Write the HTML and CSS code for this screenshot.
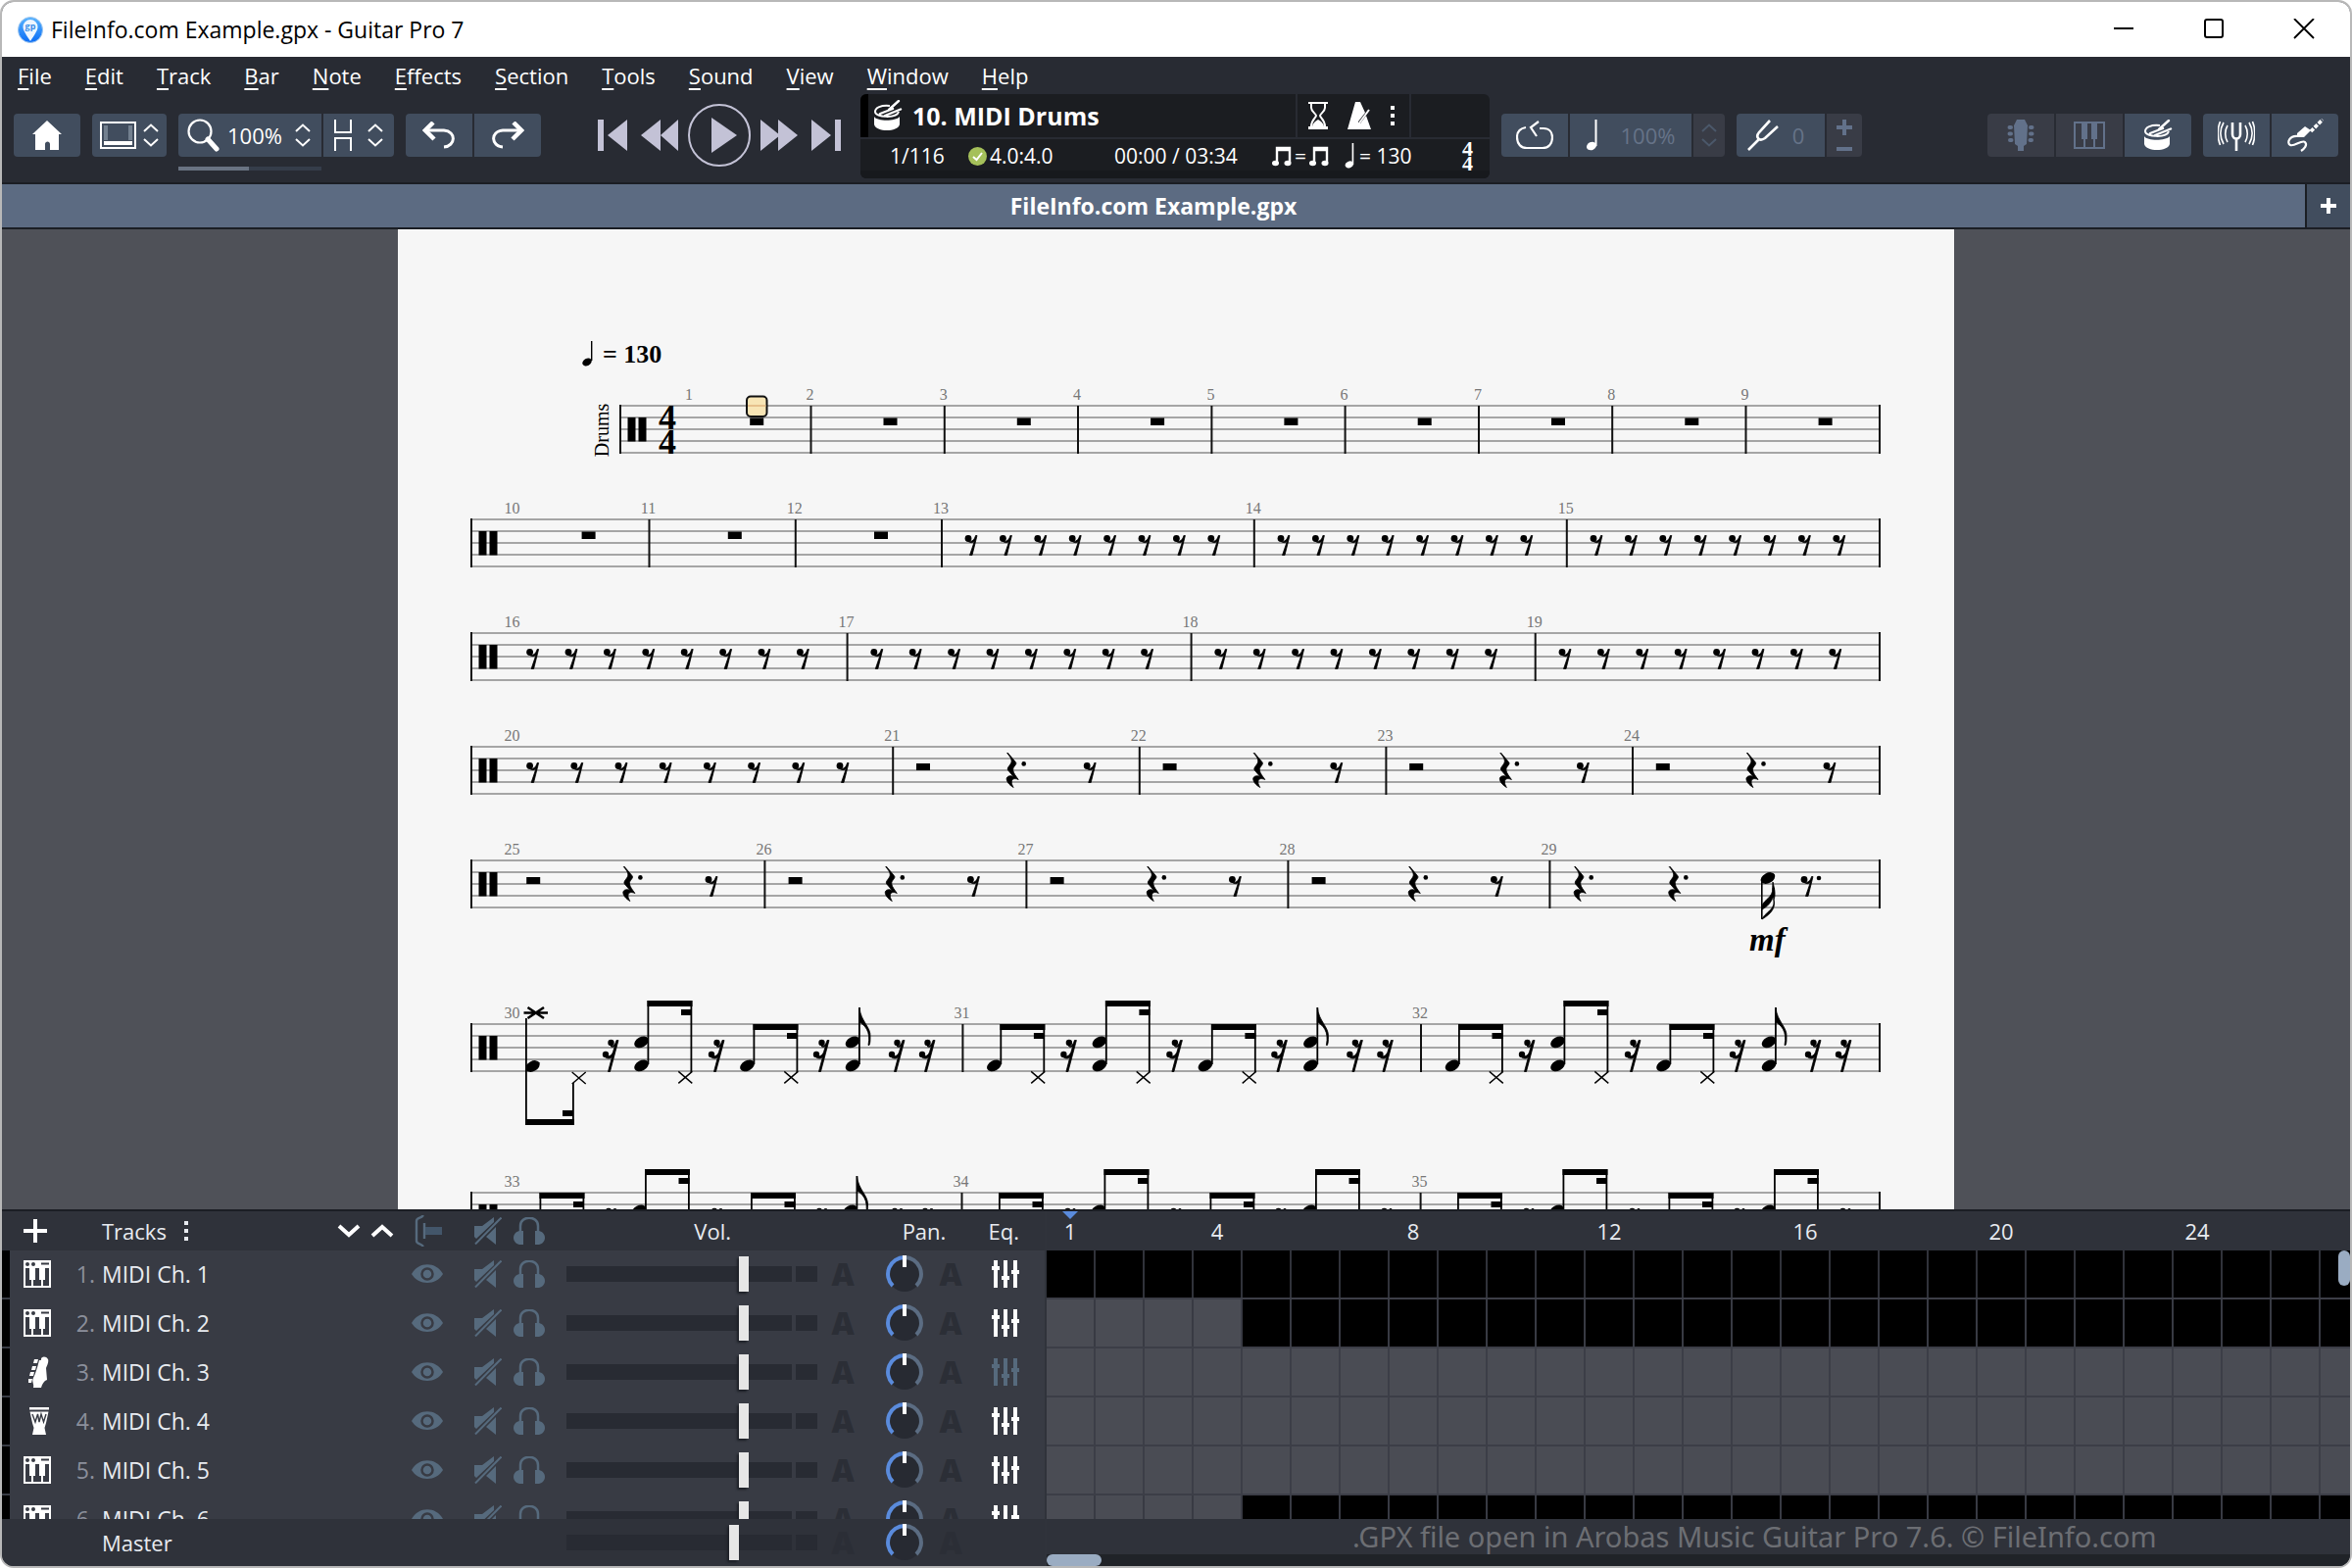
FILE: index.html
```html
<!DOCTYPE html>
<html lang="en">
<head>
<meta charset="utf-8">
<title>FileInfo.com Example.gpx - Guitar Pro 7</title>
<link rel="stylesheet" href="styles.css">
</head>
<body>
<svg class="defs" aria-hidden="true">
  <linearGradient id="logo-blue" x1="0" y1="0" x2="0" y2="1"><stop offset="0" stop-color="#58b4ff"/><stop offset="1" stop-color="#0a6cf5"/></linearGradient>
  <symbol id="updown" viewBox="0 0 16 24"><path d="M1 8 8 1.500 15 8M1 16 8 22.500 15 16" fill="none" stroke="currentColor" stroke-width="2"/></symbol>
  <symbol id="drum" viewBox="0 0 30 32"><path d="M1 17C4 22 23 22 27 17V25C25 33 3 33 1 25Z" fill="currentColor"/><path d="M17 6C8 5 2 8 2 12C2 18 24 19 26 12" fill="none" stroke="currentColor" stroke-width="2"/><path d="M7 14 20 9M12 16 28 9.500M16 10 26 1" fill="none" stroke="currentColor" stroke-width="2.400" stroke-linecap="round"/></symbol>
  <symbol id="keys" viewBox="0 0 28 28"><path d="M0 0H28V28H0Z" fill="currentColor"/><path d="M2 8H26V26H2ZM18 2.500H26V4.500H18Z" fill="#383b44"/><path d="M6 7H12V20H10V27H8V20H6ZM16 7H22V20H20V27H18V20H16Z" fill="currentColor"/><circle cx="4" cy="4" r="2" fill="#383b44"/><circle cx="10" cy="4" r="2" fill="#383b44"/></symbol>
  <symbol id="headstock" viewBox="0 0 22 32"><path d="M13 4C12 0 18-1 20 3C21 6 19 9 18 12L19 24C16 25 14 28 13 32H5C6 28 3 26 5 22C7 18 9 12 11 4Z" fill="currentColor"/><path d="M6 3H10L9 7H5ZM4 10H8L7 14H3ZM2 16H6L5 20H1ZM0 23H4L3 27H0Z" fill="currentColor"/></symbol>
  <symbol id="djembe" viewBox="0 0 22 28"><path d="M1 0H21V2.500H1ZM1.500 4.500H20.500L18 16L16.500 21L18 28H4L5.500 21L4 16Z" fill="currentColor"/><path d="M4 7 7 15 9.500 7 11 15 13 7 15.500 15 18 7" fill="none" stroke="#383b44" stroke-width="1.400"/></symbol>
  <symbol id="eye" viewBox="0 0 32 20"><path d="M0 10C7-3 25-3 32 10C25 22 7 22 0 10Z" fill="currentColor"/><circle cx="16" cy="10" r="5.500" fill="none" stroke="#383b44" stroke-width="2.500"/></symbol>
  <symbol id="mute" viewBox="0 0 28 28"><path d="M0 9H8L20 0V5L2 22L0 20ZM22 10V28L12 20Z" fill="currentColor"/><path d="M1 27.500 27.500 .500" stroke="currentColor" stroke-width="2"/></symbol>
  <symbol id="phones" viewBox="0 0 32 28"><path d="M7 16V9C7-2 25-2 25 9V16" fill="none" stroke="currentColor" stroke-width="2.500"/><path d="M10 14V28H6C-2 26-2 16 6 14ZM22 14V28H26C34 26 34 16 26 14Z" fill="currentColor"/></symbol>
  <symbol id="eq" viewBox="0 0 28 28"><path d="M2 0H6V28H2ZM12 0H16V28H12ZM22 0H26V28H22ZM0 6H8V10H0ZM10 16H18V20H10ZM20 10H28V14H20Z" fill="currentColor"/></symbol>
  <symbol id="knob" viewBox="0 0 38 38"><circle cx="19" cy="20" r="17" fill="#272a32"/><path d="M7 31A17 17 0 0 1 19 2" fill="none" stroke="#5a8bdc" stroke-width="4"/><path d="M19 2A17 17 0 0 1 31 31" fill="none" stroke="#5b6c82" stroke-width="4"/><path d="M17 0H21V12H17Z" fill="#fff"/></symbol>
  <symbol id="quarter" viewBox="0 0 13 32"><ellipse cx="5" cy="27" rx="5.200" ry="4" transform="rotate(-25 5 27)" fill="currentColor"/><path d="M8.500 0H10.500V27H8.500Z" fill="currentColor"/></symbol>
  <symbol id="pair" viewBox="0 0 20 21"><path d="M5 17V2H18V17M5 4H18" fill="none" stroke="currentColor" stroke-width="2.400"/><ellipse cx="3.500" cy="17.500" rx="3.500" ry="2.800" fill="currentColor"/><ellipse cx="16" cy="17.500" rx="3.500" ry="2.800" fill="currentColor"/></symbol>
  <symbol id="dots" viewBox="0 0 5 20"><path d="M0 0H4V4H0ZM0 8H4V12H0ZM0 16H4V20H0Z" fill="currentColor"/></symbol>
</svg>

<div class="window">
  <header class="titlebar">
    <svg class="logo" width="26" height="27" viewBox="0 0 26 27"><ellipse cx="13" cy="13.500" rx="12.500" ry="13" fill="url(#logo-blue)" stroke="#9fc6ee"/><path d="M13 25C9 19 5.500 14 5.500 10.500A7.500 7.500 0 0 1 20.500 10.500C20.500 14 17 19 13 25Z" fill="#eef6ff"/><text class="logo-text" x="13" y="13" text-anchor="middle">gp</text></svg>
    <h1 class="title">FileInfo.com Example.gpx - Guitar Pro 7</h1>
    <div class="window-controls">
      <button aria-label="Minimize"><svg width="22" height="22" viewBox="0 0 22 22"><path d="M1 10H21" stroke="#000" stroke-width="2"/></svg></button>
      <button aria-label="Maximize"><svg width="22" height="22" viewBox="0 0 22 22"><rect x="2" y="1" width="18" height="18" rx="2" fill="none" stroke="#000" stroke-width="2"/></svg></button>
      <button aria-label="Close"><svg width="22" height="22" viewBox="0 0 22 22"><path d="M1 0 21 20M21 0 1 20" stroke="#000" stroke-width="1.800"/></svg></button>
    </div>
  </header>

  <nav class="menubar">
    <a href="#"><u>F</u>ile</a><a href="#"><u>E</u>dit</a><a href="#"><u>T</u>rack</a><a href="#"><u>B</u>ar</a><a href="#"><u>N</u>ote</a><a href="#"><u>E</u>ffects</a><a href="#"><u>S</u>ection</a><a href="#"><u>T</u>ools</a><a href="#"><u>S</u>ound</a><a href="#"><u>V</u>iew</a><a href="#"><u>W</u>indow</a><a href="#"><u>H</u>elp</a>
  </nav>

  <div class="toolbar">
    <div class="group"><button class="tool w68" aria-label="Home"><svg width="32" height="30" viewBox="0 0 32 30"><path d="M16 0 31 14H28V30H19V24C19 20.500 14 20.500 14 24V30H4V14H1Z" fill="currentColor"/></svg></button></div>
    <div class="group"><button class="tool w76" aria-label="Layout"><svg width="37" height="28" viewBox="0 0 37 28"><rect x="1" y="1" width="35" height="26" fill="none" stroke="currentColor" stroke-width="2"/><path d="M4 4H8V19H4ZM29 4H33V19H29Z" fill="#73808f"/><path d="M4 20H33V24H4Z" fill="currentColor"/></svg><svg width="16" height="24"><use href="#updown"/></svg></button></div>
    <div class="group zoom-group">
      <button class="tool zoom" aria-label="Zoom"><svg width="34" height="34" viewBox="0 0 34 34"><circle cx="13" cy="13" r="11.500" fill="none" stroke="currentColor" stroke-width="2.200"/><path d="M21 21 30 31" stroke="currentColor" stroke-width="5" stroke-linecap="round"/></svg><span>100%</span><svg width="16" height="24"><use href="#updown"/></svg></button>
      <button class="tool w72" aria-label="Spacing"><svg width="18" height="32" viewBox="0 0 18 32"><path d="M1 0V13H17V0M1 32V19H17V32" fill="none" stroke="currentColor" stroke-width="2"/></svg><svg width="16" height="24"><use href="#updown"/></svg></button>
      <div class="zoom-bar"></div>
    </div>
    <div class="group">
      <button class="tool w68" aria-label="Undo"><svg width="34" height="28" viewBox="0 0 34 28"><path d="M2 9H22C35 10 34 25 22 26" fill="none" stroke="currentColor" stroke-width="3"/><path d="M11 1 3 9 12 18" fill="none" stroke="currentColor" stroke-width="4.500"/></svg></button>
      <button class="tool w68" aria-label="Redo"><svg width="34" height="28" viewBox="0 0 34 28"><path d="M32 9H12C-1 10 0 25 12 26" fill="none" stroke="currentColor" stroke-width="3"/><path d="M23 1 31 9 22 18" fill="none" stroke="currentColor" stroke-width="4.500"/></svg></button>
    </div>

    <div class="transport">
      <button aria-label="First bar"><svg width="30" height="32" viewBox="0 0 30 32"><path d="M0 0H6V32H0ZM30 0V32L10 16Z" fill="currentColor"/></svg></button>
      <button aria-label="Rewind"><svg width="38" height="32" viewBox="0 0 38 32"><path d="M20 0V32L0 16ZM38 0V32L20 16Z" fill="currentColor"/></svg></button>
      <button aria-label="Play"><svg width="64" height="64" viewBox="0 0 64 64"><circle cx="32" cy="32" r="31" fill="none" stroke="currentColor" stroke-width="2"/><path d="M24 14V50L50 32Z" fill="currentColor"/></svg></button>
      <button aria-label="Forward"><svg width="38" height="32" viewBox="0 0 38 32"><path d="M0 0V32L20 16ZM18 0V32L38 16Z" fill="currentColor"/></svg></button>
      <button aria-label="Last bar"><svg width="30" height="32" viewBox="0 0 30 32"><path d="M0 0V32L20 16ZM24 0H30V32H24Z" fill="currentColor"/></svg></button>
    </div>

    <section class="display">
      <div class="display-top">
        <span class="track-color"></span>
        <div class="current"><svg width="30" height="32"><use href="#drum"/></svg><strong>10. MIDI Drums</strong></div>
        <div class="display-tools">
          <button aria-label="Countdown"><svg width="20" height="28" viewBox="0 0 20 28"><path d="M0 0H20V2H0ZM0 25H20V28H0Z" fill="currentColor"/><path d="M3 2V6C3 10 8 12 8 14C8 16 3 18 3 25M17 2V6C17 10 12 12 12 14C12 16 17 18 17 25" fill="none" stroke="currentColor" stroke-width="2"/><path d="M10 18C13 20 16 22 16 26H4C4 22 7 20 10 18Z" fill="currentColor"/></svg></button>
          <button aria-label="Metronome"><svg width="24" height="28" viewBox="0 0 24 28"><path d="M8 0H13L18 11L11 20V22H13L19 14L24 28H0Z" fill="currentColor"/><path d="M11 23 22 8" stroke="currentColor" stroke-width="2"/></svg></button>
          <button aria-label="More"><svg width="5" height="20"><use href="#dots"/></svg></button>
        </div>
        <span class="display-end"></span>
      </div>
      <div class="display-bottom">
        <span>1/116</span>
        <span><svg width="19" height="19" viewBox="0 0 19 19"><circle cx="9.500" cy="9.500" r="9.500" fill="#a5c05a"/><path d="M5 10 8.500 13 14 6" fill="none" stroke="#fff" stroke-width="2"/></svg>4.0:4.0</span>
        <span>00:00 / 03:34</span>
        <span><svg width="20" height="21"><use href="#pair"/></svg>=<svg width="20" height="21"><use href="#pair"/></svg></span>
        <span><svg width="12" height="26"><use href="#quarter"/></svg>= 130</span>
        <span class="meter"><b>4</b><b>4</b></span>
      </div>
    </section>

    <div class="group">
      <button class="tool w68" aria-label="Loop"><svg width="38" height="30" viewBox="0 0 38 30"><path d="M24 8H28C34 8 37 12 37 17C37 24 33 28 27 28H11C5 28 1 24 1 17C1 12 4 8 10 7" fill="none" stroke="currentColor" stroke-width="2.200"/><path d="M23 1 15 7 21 16" fill="none" stroke="currentColor" stroke-width="2.200"/></svg></button>
      <button class="tool speed" aria-label="Speed"><svg width="13" height="32"><use href="#quarter"/></svg><span>100%</span></button>
      <button class="tool w32 off" aria-label="Change speed" disabled><svg width="16" height="24"><use href="#updown"/></svg></button>
    </div>
    <div class="group">
      <button class="tool w90 tuning" aria-label="Tuning"><svg width="32" height="32" viewBox="0 0 32 32"><path d="M1 31 12 20M23 1 12 13C8 18 12 23 18 19L31 7" fill="none" stroke="currentColor" stroke-width="2.600"/></svg><span>0</span></button>
      <button class="tool w36 off" aria-label="Change tuning" disabled><svg width="16" height="32" viewBox="0 0 16 32"><path d="M6 0H10V6H16V10H10V16H6V10H0V6H6ZM0 28H16V32H0Z" fill="#62718a"/></svg></button>
    </div>
    <div class="group right">
      <button class="tool w68 off" aria-label="Fretboard" disabled><svg width="28" height="32" viewBox="0 0 28 32"><path d="M10 0H18L21 6L20 25L17 27V32H11V27L8 25L7 6Z" fill="#62718a"/><path d="M2.500 8H4M2.500 14.500H4M3 21H4.500M24 8H25.500M24 14.500H25.500M23.500 21H25" stroke="#62718a" stroke-width="4" stroke-linecap="round"/></svg></button>
      <button class="tool w68 off" aria-label="Keyboard" disabled><svg width="32" height="28" viewBox="0 0 32 28"><path d="M1 1H31V27H1ZM11 1V27M21 1V27" fill="none" stroke="#62718a" stroke-width="2"/><path d="M8 1H14V18H8ZM18 1H24V18H18Z" fill="#62718a"/></svg></button>
      <button class="tool w68" aria-label="Drums view"><svg width="30" height="32"><use href="#drum"/></svg></button>
    </div>
    <div class="group">
      <button class="tool w68" aria-label="Tuner"><svg width="38" height="32" viewBox="0 0 38 32"><path d="M15 3V15C15 21 23 21 23 15V3M19 19V32" fill="none" stroke="currentColor" stroke-width="2.600"/><path d="M10 6C7 11 7 18 10 23M6 3C2 10 2 18 6 25M2.500 2C-.500 9-.500 19 2.500 26M28 6C31 11 31 18 28 23M32 3C36 10 36 18 32 25M35.500 2C38.500 9 38.500 19 35.500 26" fill="none" stroke="currentColor" stroke-width="1.600"/></svg></button>
      <button class="tool w68" aria-label="Line in"><svg width="38" height="34" viewBox="0 0 38 34"><path d="M25 13 37 1" stroke="currentColor" stroke-width="3.600" stroke-dasharray="4 1.500"/><path d="M11 15 19 8 25 12 18 19 11 19Z" fill="currentColor"/><path d="M12 18C3 17 0 25 4 27C8 29 16 21 19 24C22 27 18 31 15 33" fill="none" stroke="currentColor" stroke-width="2.200"/></svg></button>
    </div>
  </div>

  <div class="tabs">
    <button class="tab">FileInfo.com Example.gpx</button>
    <button class="new-tab" aria-label="New tab"><svg width="16" height="16" viewBox="0 0 16 16"><path d="M6 0H10V6H16V10H10V16H6V10H0V6H6Z" fill="#fff"/></svg></button>
  </div>

  <main class="workspace"><div class="sheet"><svg id="score" class="score" viewBox="406 234 1588 1000" role="img" aria-label="Drum score"></svg></div></main>

  <section class="tracks">
    <div class="mixer">
      <div class="row head">
        <button class="icon add" aria-label="Add track"><svg width="24" height="24" viewBox="0 0 24 24"><path d="M10 0H14V10H24V14H14V24H10V14H0V10H10Z" fill="#fff"/></svg></button>
        <div class="name">Tracks<button aria-label="Track options"><svg width="5" height="20"><use href="#dots"/></svg></button><span class="arrows"><svg width="24" height="14" viewBox="0 0 24 14"><path d="M2 2 12 11 22 2" fill="none" stroke="#fff" stroke-width="4"/></svg><svg width="24" height="14" viewBox="0 0 24 14"><path d="M2 12 12 3 22 12" fill="none" stroke="#fff" stroke-width="4"/></svg></span></div>
        <svg class="dim" width="30" height="32" viewBox="0 0 30 32"><path d="M10 0C7 4 3 2 3 6V26C3 30 7 28 10 32M11 8V24" fill="none" stroke="currentColor" stroke-width="2.400"/><path d="M12 12H29V20H12Z" fill="#43566a"/></svg>
        <svg class="dim" width="28" height="28"><use href="#mute"/></svg>
        <svg class="dim" width="32" height="28"><use href="#phones"/></svg>
        <span class="vol">Vol.</span><span class="pan">Pan.</span><span class="eq">Eq.</span>
      </div>
      <div class="rows" id="rows"></div>
      <div class="row master">
        <div class="name">Master</div>
        <input class="fader" type="range" aria-label="Master volume" min="0" max="220" value="166"><i class="meter-box"></i><b class="auto">A</b>
        <button class="icon" aria-label="Master pan"><svg width="38" height="38"><use href="#knob"/></svg></button><b class="auto">A</b>
      </div>
    </div>
    <div class="timeline">
      <ol class="ruler"><li class="bar-1">1</li><li class="bar-4">4</li><li class="bar-8">8</li><li class="bar-12">12</li><li class="bar-16">16</li><li class="bar-20">20</li><li class="bar-24">24</li></ol>
      <div class="lanes"><div class="lane full"></div><div class="lane late"></div><div class="lane"></div><div class="lane"></div><div class="lane"></div><div class="lane late"></div><span class="v-thumb"></span></div>
      <p class="caption">.GPX file open in Arobas Music Guitar Pro 7.6. © FileInfo.com</p>
      <div class="h-scroll"><span class="h-thumb"></span></div>
    </div>
  </section>
</div>
<script src="app.js"></script>
</body>
</html>
```

FILE: styles.css
```css
* { box-sizing: border-box; }
body { margin: 0; background: #fff; font-family: "Open Sans", "Noto Sans", sans-serif; font-size: 22px; line-height: 30px; }
button { border: 0; padding: 0; margin: 0; background: none; color: inherit; font: inherit; display: flex; align-items: center; justify-content: center; }
svg { display: block; flex: none; }
.defs { position: absolute; width: 0; height: 0; }
.window { height: 100vh; display: flex; flex-direction: column; border: 2px solid #b8b8b8; border-radius: 14px; overflow: hidden; background: #282b33; color: #fff; }

.titlebar { flex: none; height: 56px; background: #fff; color: #000; display: flex; align-items: center; padding: 0 26px 0 16px; }
.logo-text { font-size: 9px; font-weight: 700; fill: #3b8fe8; }
.title { margin: 0 0 0 8px; font-size: 23px; font-weight: 400; }
.window-controls { margin-left: auto; display: flex; gap: 70px; padding-right: 10px; }

.menubar { flex: none; height: 38px; display: flex; gap: 34px; padding: 4px 16px; }
.menubar a { color: #fff; text-decoration: none; }
.menubar u { text-underline-offset: 4px; text-decoration-thickness: 2px; }

.toolbar { flex: none; display: flex; align-items: flex-start; gap: 12px; padding: 0 12px 4px; }
.group { display: flex; gap: 2px; margin-top: 20px; border-radius: 4px; }
.right { margin-left: auto; }
.tool { height: 44px; background: #414d5e; color: #fff; gap: 7px; }
.group > .tool:first-child { border-radius: 4px 0 0 4px; }
.group > .tool:last-of-type { border-radius: 0 4px 4px 0; }
.group > .tool:only-of-type { border-radius: 4px; }
.off { background: #393c46; color: #4b586a; }
.w32 { width: 32px; } .w36 { width: 36px; } .w68 { width: 68px; } .w72 { width: 72px; } .w76 { width: 76px; } .w90 { width: 90px; }
.w72 { gap: 16px; }
.zoom { width: 146px; padding-right: 2px; }
.zoom span { margin-right: 6px; }
.zoom-group { position: relative; }
.zoom-bar { position: absolute; left: 0; top: 54px; width: 146px; height: 4px; background: linear-gradient(90deg, #697382 72px, #353d4a 72px); }
.speed { width: 124px; gap: 22px; }
.speed span, .tuning span { color: #667388; }
.tuning { gap: 14px; padding-right: 10px; }

.transport { display: flex; align-items: center; gap: 14px; height: 64px; margin: 10px 8px 0 46px; color: #c3c2d6; }
.transport button:nth-child(2) { margin-right: -4px; }
.transport button:nth-child(4) { margin-left: -4px; }

.display { width: 642px; border-radius: 6px; overflow: hidden; background: #1b1d21; }
.display-top { height: 46px; display: flex; border-bottom: 2px solid #282b33; }
.track-color { width: 8px; background: #000; }
.current { flex: 1; display: flex; align-items: center; gap: 10px; padding-left: 5px; font-size: 25px; }
.display-tools { width: 118px; display: flex; align-items: center; gap: 20px; padding-left: 11px; border: solid #282b33; border-width: 0 2px; }
.display-end { width: 80px; }
.display-bottom { height: 40px; display: grid; grid-template-columns: 80px 149px 161px 74px 120px 1fr; padding: 2px 0 0 30px; border-bottom: 8px solid #17191d; font-size: 21px; }
.display-bottom span { display: flex; align-items: center; gap: 3px; white-space: nowrap; }
.display-bottom .meter { flex-direction: column; justify-content: center; gap: 0; font: 700 22px/15px "Liberation Serif", serif; align-items: flex-start; }

.tabs { flex: none; height: 48px; display: flex; gap: 2px; background: #1b1e24; border: solid #1b1e24; border-width: 2px 0; }
.tab { flex: 1; background: #5c6b82; font-size: 23px; font-weight: 700; }
.new-tab { width: 44px; background: #414d5e; }

.workspace { flex: 1; min-height: 0; overflow: hidden; background: #4f5158; }
.sheet { max-width: 1588px; margin: 0 auto; background: #f6f6f6; }
.score { width: 100%; height: auto; font-family: "Liberation Serif", serif; }
.staff { stroke: #8a8a8a; stroke-width: 1.4; }
.barline { stroke: #111; stroke-width: 2; }
.rest { stroke: #000; stroke-width: .8; }
.bar-number { font-size: 16px; fill: #777; text-anchor: middle; }
.mark { font-size: 26px; font-weight: 700; }
.part { font-size: 20px; text-anchor: middle; }
.signature { font-size: 36px; font-weight: 700; text-anchor: middle; }
.dynamic { font-size: 33px; font-weight: 700; font-style: italic; }

.tracks { flex: none; display: flex; border-top: 2px solid #1b1e24; background: #2f323a; color: #e8ebf0; }
.mixer { width: 1066px; border-right: 2px solid #30333b; }
.row { height: 50px; display: grid; grid-template-columns: 8px 42px 45px 323px 32px 60px 44px 252px 26px 38px 70px 40px 58px 24px; justify-items: end; align-items: center; padding-bottom: 2px; }
.rows { height: 274px; overflow: hidden; background: #383b44; font-size: 23px; }
.head { height: 40px; padding: 0; }
.strip { width: 8px; height: 48px; background: #000; }
.icon { color: #fff; }
.row .add { grid-column: 2; padding-right: 4px; }
.num { color: #8b8f9b; }
.name { grid-column: 4; justify-self: stretch; padding-left: 7px; display: flex; align-items: center; }
.name button { margin-left: 18px; }
.arrows { margin-left: auto; display: flex; gap: 10px; padding-right: 18px; }
.dim { color: #566a7d; }
.vol { padding-right: 62px; }
.pan { grid-column: 11 / 13; width: 78px; text-align: center; }
.eq { grid-column: 13; }
.fader { appearance: none; width: 230px; height: 36px; margin: 0; background: linear-gradient(#282b33, #282b33) center / 100% 16px no-repeat; }
.fader::-webkit-slider-thumb { appearance: none; width: 10px; height: 36px; background: #e6e6e6; border: 0; border-radius: 0; box-shadow: -2px 2px 2px #1d2027; }
.meter-box { width: 22px; height: 16px; background: #282b33; }
.auto { width: 24px; text-align: center; font: 800 32px/32px "Open Sans", sans-serif; color: #2b2e36; }
.master { height: 48px; padding: 0; }
.master .fader { grid-column: 8; }

.timeline { flex: 1; min-width: 0; display: flex; flex-direction: column; }
.ruler { list-style: none; margin: 0; padding: 0; height: 40px; display: grid; grid-template-columns: repeat(26, 50px); align-items: center; overflow: hidden; }
.ruler li { width: 48px; text-align: center; grid-row: 1; }
.bar-1 { grid-column: 1; position: relative; }
.bar-1::before { content: ""; position: absolute; left: 16px; top: -5px; border: solid transparent; border-width: 8px 8px 0; border-top-color: #5a8bdc; }
.bar-4 { grid-column: 4; } .bar-8 { grid-column: 8; } .bar-12 { grid-column: 12; } .bar-16 { grid-column: 16; } .bar-20 { grid-column: 20; } .bar-24 { grid-column: 24; }
.lanes { position: relative; height: 274px; overflow: hidden; background: #3c3e47; }
.lane { height: 48px; margin-bottom: 2px; background: repeating-linear-gradient(90deg, transparent 0 48px, #3c3e47 48px 50px), #4a4c54; }
.full { background: repeating-linear-gradient(90deg, transparent 0 48px, #30323a 48px 50px), #000; }
.late { background: repeating-linear-gradient(90deg, transparent 0 48px, #383a43 48px 50px), linear-gradient(90deg, #4a4c54 198px, #000 198px); }
.v-thumb { position: absolute; right: 0; top: 0; width: 12px; height: 36px; border-radius: 6px; background: #9aacc2; }
.caption { margin: 0; height: 36px; padding-left: 312px; font-family: "Noto Sans", sans-serif; font-size: 29px; line-height: 36px; color: #6c6e73; white-space: nowrap; }
.h-scroll { height: 12px; background: #202328; }
.h-thumb { display: block; width: 56px; height: 12px; border-radius: 6px; background: #9aacc2; }
```

FILE: app.js
```js
// Track list
const use = (id, w, h) => `<svg width="${w}" height="${h}"><use href="#${id}"/></svg>`;
const instruments = [["keys", 28, 28], ["keys", 28, 28], ["headstock", 24, 32], ["djembe", 24, 28], ["keys", 28, 28], ["keys", 28, 28]];
document.getElementById("rows").innerHTML = instruments.map((icon, i) => {
  const name = `MIDI Ch. ${i + 1}`;
  return `<div class="row"><span class="strip"></span>
    <span class="icon">${use(...icon)}</span><span class="num">${i + 1}.</span><div class="name">${name}</div>
    <button class="dim" aria-label="Show ${name}">${use("eye", 32, 20)}</button>
    <button class="dim" aria-label="Mute ${name}">${use("mute", 28, 28)}</button>
    <button class="dim" aria-label="Solo ${name}">${use("phones", 32, 28)}</button>
    <input class="fader" type="range" aria-label="${name} volume" min="0" max="220" value="176">
    <i class="meter-box"></i><b class="auto">A</b>
    <button aria-label="${name} pan">${use("knob", 38, 38)}</button><b class="auto">A</b>
    <button class="${i === 2 ? "dim" : "icon"}" aria-label="${name} equalizer">${use("eq", 28, 28)}</button></div>`;
}).join("");

// Score engraving
const out = [];
const line = (x1, y1, x2, y2, cls) => out.push(`<line x1="${x1}" y1="${y1}" x2="${x2}" y2="${y2}" class="${cls}"/>`);
const box = (x, y, w, h) => out.push(`<rect x="${x}" y="${y}" width="${w}" height="${h}"/>`);
const text = (x, y, cls, s) => out.push(`<text x="${x}" y="${y}" class="${cls}">${s}</text>`);
const shape = (x, y, d) => out.push(`<path class="rest" transform="translate(${x} ${y})" d="${d}"/>`);
const dot = (x, y, r = 2.3) => out.push(`<circle cx="${x}" cy="${y}" r="${r}"/>`);
const head = (x, y, rx = 7.8, ry = 5.2) => out.push(`<ellipse cx="${x}" cy="${y}" rx="${rx}" ry="${ry}" transform="rotate(-28 ${x} ${y})"/>`);
const RIGHT = 1918;

function system(left, top, bars, firstNumberX, offset = -6) {
  for (let i = 0; i < 5; i++) line(left, top + i * 12, RIGHT, top + i * 12, "staff");
  line(left, top - 1, left, top + 49, "barline");
  line(RIGHT, top - 1, RIGHT, top + 49, "barline");
  box(left + 7.5, top + 12, 8, 24.5);
  box(left + 18.5, top + 12, 8, 24.5);
  bars.forEach(([n, x], i) => {
    if (i) line(x, top, x, top + 49, "barline");
    text(i ? x - 1 : firstNumberX, top + offset, "bar-number", n);
  });
}
const wholeRest = (x, top) => box(x - 7, top + 12.5, 14, 7.5);
const halfRest = (x, top) => box(x - 7, top + 17, 14, 7);
const quarterRest = (x, top) => {
  shape(x - 6, top + 6, "M1.500 0L9.500 9.500C12 12 6.500 14 7 18C7.500 21 10 24 12.500 27.500C8 25.500 5.500 27 5.500 30C5.500 32 6.500 34 7.500 35.500C3 33 0 29 .500 26C1.500 23.500 5 23 7.500 24.500L2 18C0 15.500 5 12.500 5.500 9C5.700 6 3 3 1 .500Z");
  dot(x + 12, top + 17.4);
};
const eighthRest = (x, top) => {
  shape(x - 6, top + 16.5, "M3 6C7 6.500 9.500 4 10.500 0H12L7 20H4.500L9.300 6C7.500 7.500 5 7.500 3 6Z");
  dot(x - 3, top + 19.5, 3.4);
};
const sixteenthRest = (x, top) => {
  shape(x - 8, top + 15.5, "M9 7C11 7 13 5 14 1H16L7.500 33H5.500L9.500 18C8 20 5 20 3 18.500V17.500C7 18 9.500 16 10.500 13L12.500 6.500C11 8.500 9 8 8 7Z");
  dot(x + 0.5, top + 19, 3.2);
  dot(x - 5, top + 31, 3.2);
};
const cross = (x, y) => out.push(`<path d="M${x - 7} ${y - 6}L${x + 7} ${y + 6}M${x + 7} ${y - 6}L${x - 7} ${y + 6}" stroke="#000" stroke-width="1.400"/>`);

// Beamed pair: drum hit with a hi-hat sixteenth 45px later
function beamed(x, top, chord) {
  const beam = chord ? top - 24 : top;
  head(x, top + 42.4);
  if (chord) head(x, top + 18.4);
  box(x + 6, beam, 1.8, top + 41 - beam);
  box(x + 6, beam, 46, 6);
  box(x + 40.5, beam + 9, 11, 6);
  box(x + 50, beam, 1.8, top + 49 - beam);
  cross(x + 44.8, top + 54.4);
}
function flagged(x, top) {
  head(x, top + 42.4);
  head(x, top + 18.4);
  box(x + 6, top - 17, 1.8, 58);
  shape(x + 7, top - 17, "M0 0C1 14 12 20 11 30C11 34 11 36 10 38.500H9C12 24 5 18 0 15Z");
}
function groove(b, top, first, lastBeamed) {
  if (first) beamed(b + 32, top, false);
  sixteenthRest(b + 108, top);
  beamed(b + 139.5, top, true);
  sixteenthRest(b + 216, top);
  beamed(b + 247.5, top, false);
  sixteenthRest(b + 323, top);
  if (lastBeamed) beamed(b + 355, top, true);
  else { flagged(b + 355, top); sixteenthRest(b + 400, top); }
  sixteenthRest(b + 431, top);
}
const repeat = (x, step, top) => { for (let i = 0; i < 8; i++) eighthRest(x + i * step, top); };

// Tempo, part name, first system
head(599, 369.5, 5, 3.6);
box(603, 348, 1.4, 20);
text(615, 370, "mark", "= 130");
out.push(`<text class="part" transform="translate(621 439) rotate(-90)">Drums</text>`);
const opening = [827.5, 963.8, 1100, 1236.4, 1372.6, 1509, 1645.2, 1781.5];
system(633, 414, [[1, 633], ...opening.map((x, i) => [i + 2, x])], 703);
text(681, 438, "signature", "4");
text(681, 463, "signature", "4");
for (let i = 0; i < 9; i++) wholeRest(772.2 + i * 136.3, 414);
out.push(`<rect x="762" y="404.500" width="20.500" height="20.500" rx="4" fill="#f8e5b5" stroke="#111" stroke-width="2"/><path d="M763 414H781.500" stroke="#e0b27a" stroke-width="1.400"/>`);

system(481, 530, [[10, 481], [11, 662.5], [12, 811.8], [13, 961], [14, 1279.8], [15, 1598.8]], 522.5);
[600.6, 749.8, 899].forEach(x => wholeRest(x, 530));
[991, 1310, 1629].forEach(x => repeat(x, 35.4, 530));

system(481, 646, [[16, 481], [17, 864.6], [18, 1215.6], [19, 1566.7]], 522.5);
[543.6, 894.8, 1245.8, 1597].forEach(x => repeat(x, 39.4, 646));

system(481, 762, [[20, 481], [21, 911.2], [22, 1162.8], [23, 1414.4], [24, 1666]], 522.5);
repeat(543.6, 45.2, 762);
[911.2, 1162.8, 1414.4, 1666].forEach(b => { halfRest(b + 30.8, 762); quarterRest(b + 121.5, 762); eighthRest(b + 201, 762); });

system(481, 878, [[25, 481], [26, 780.4], [27, 1047.4], [28, 1314.4], [29, 1581.4]], 522.5);
[513, 780.4, 1047.4, 1314.4].forEach(b => { halfRest(b + 31.2, 878); quarterRest(b + 128.4, 878); eighthRest(b + 213, 878); });
quarterRest(1611.7, 878);
quarterRest(1708.3, 878);
head(1804, 896);
box(1797, 898, 1.6, 40);
shape(1798, 938, "M0 0C2-6 13-10 12-18C12-23 10-27 11-38C13-30 14-25 12-20C14-12 10-6 0 0ZM0-14C2-20 11-22 11-32L12.500-32C13-22 8-14 0-10Z");
eighthRest(1844, 878);
dot(1856, 896);
text(1785, 970, "dynamic", "mf");

system(481, 1045, [[30, 481], [31, 982.4], [32, 1450]], 522.5);
out.push(`<path d="M538.500 1028L555 1039M555 1028L538.500 1039M534.500 1033.500H559" stroke="#000" stroke-width="2.600"/>`);
box(536, 1039, 1.8, 108);
head(543.5, 1088);
box(536, 1142, 50, 6);
box(574, 1133, 11, 6);
box(584, 1105, 1.8, 42);
cross(590.7, 1100);
groove(515, 1045, false, false);
groove(982.4, 1045, true, false);
groove(1450, 1045, true, false);

system(481, 1217, [[33, 481], [34, 981.5], [35, 1449.6]], 522.5);
groove(512.5, 1217, true, false);
groove(981, 1217, true, true);
groove(1449, 1217, true, true);

document.getElementById("score").innerHTML = out.join("");
```
